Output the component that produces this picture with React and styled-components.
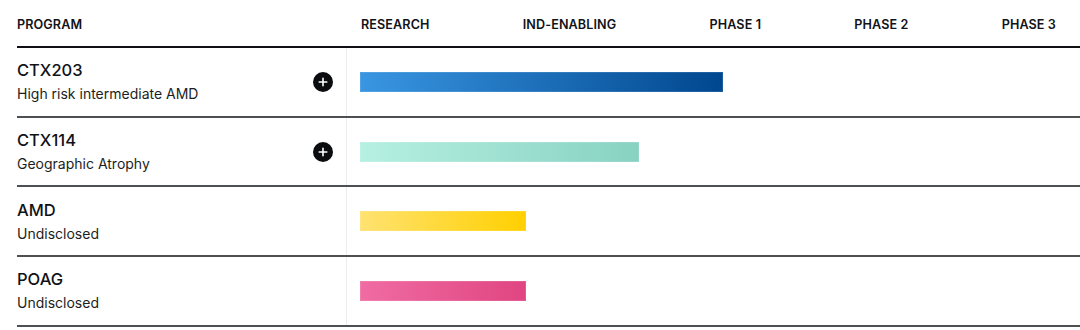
import React from "react";
import styled, { createGlobalStyle } from "styled-components";

const Global = createGlobalStyle`
  html, body { margin: 0; padding: 0; background: #ffffff; }
  body { font-family: Inter, "Liberation Sans", Arial, sans-serif; color: #111318; }
`;

const Table = styled.div`
  margin-left: 17px;
  display: flex;
  flex-direction: column;
`;

const HeaderRow = styled.div`
  display: grid;
  grid-template-columns: 330px 1fr;
  height: 48px;
  box-sizing: border-box;
  padding-top: 17px;
  border-bottom: 2px solid #0e1014;
`;

const HeadLabel = styled.div`
  font-size: 12.6px;
  line-height: 16px;
  font-weight: 600;
  letter-spacing: 0.1px;
  color: #111318;
  white-space: nowrap;
`;

const Phases = styled.div`
  display: flex;
  justify-content: space-between;
  padding-left: 14px;
  padding-right: 24px;
`;

const Row = styled.div`
  display: grid;
  grid-template-columns: 330px 1fr;
  height: 67.7px;
  border-bottom: 2px solid #4d5053;
`;

const ProgramCell = styled.div`
  display: flex;
  align-items: center;
  justify-content: space-between;
  padding-right: 13px;
  border-right: 1px solid #ececec;
`;

const Names = styled.div`
  display: flex;
  flex-direction: column;
  gap: 3px;
`;

const Title = styled.div`
  font-size: 16.5px;
  line-height: 22px;
  font-weight: 500;
  color: #101216;
`;

const Subtitle = styled.div`
  font-size: 14px;
  line-height: 20px;
  font-weight: 400;
  color: #1c1e22;
`;

const PlusButton = styled.button`
  width: 20px;
  height: 20px;
  border-radius: 50%;
  border: none;
  padding: 0;
  background: #0b0c0f;
  display: flex;
  align-items: center;
  justify-content: center;
  cursor: pointer;
`;

const ChartCell = styled.div`
  display: flex;
  align-items: center;
  padding-left: 13px;
`;

const Bar = styled.div`
  height: 20px;
  background: linear-gradient(90deg, ${(p) => p.$from}, ${(p) => p.$to});
  box-shadow: inset 0 0 0 1px rgba(255, 255, 255, 0.12);
`;

const phases = ["RESEARCH", "IND-ENABLING", "PHASE 1", "PHASE 2", "PHASE 3"];

const programs = [
  { name: "CTX203", desc: "High risk intermediate AMD", plus: true, width: 363, from: "#3a96e2", to: "#00478f" },
  { name: "CTX114", desc: "Geographic Atrophy", plus: true, width: 279, from: "#b6f0e2", to: "#88d2c2" },
  { name: "AMD", desc: "Undisclosed", plus: false, width: 166, from: "#ffe271", to: "#ffd000" },
  { name: "POAG", desc: "Undisclosed", plus: false, width: 166, from: "#f06ca2", to: "#e04582" },
];

const PlusIcon = () => (
  <svg width="10" height="10" viewBox="0 0 10 10">
    <path d="M5 1.2v7.6M1.2 5h7.6" stroke="#fff" strokeWidth="1.6" strokeLinecap="round" />
  </svg>
);

export default function App() {
  return (
    <>
      <Global />
      <Table>
        <HeaderRow>
          <HeadLabel>PROGRAM</HeadLabel>
          <Phases>
            {phases.map((p) => (
              <HeadLabel key={p}>{p}</HeadLabel>
            ))}
          </Phases>
        </HeaderRow>
        {programs.map((p) => (
          <Row key={p.name}>
            <ProgramCell>
              <Names>
                <Title>{p.name}</Title>
                <Subtitle>{p.desc}</Subtitle>
              </Names>
              {p.plus && (
                <PlusButton aria-label="Expand">
                  <PlusIcon />
                </PlusButton>
              )}
            </ProgramCell>
            <ChartCell>
              <Bar $from={p.from} $to={p.to} style={{ width: p.width }} />
            </ChartCell>
          </Row>
        ))}
      </Table>
    </>
  );
}
